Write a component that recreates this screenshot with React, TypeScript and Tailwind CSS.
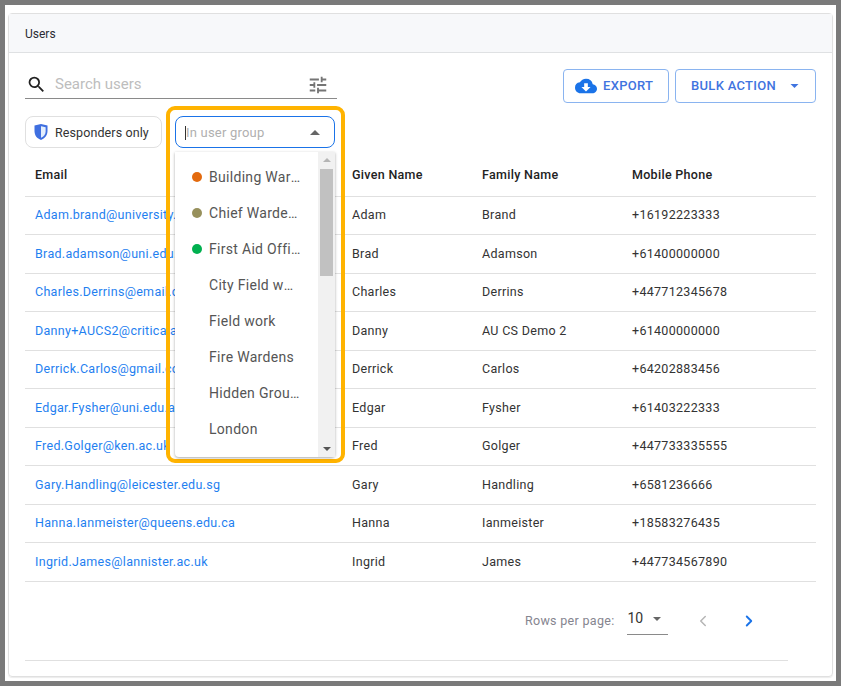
import { ChevronLeft, ChevronRight } from "lucide-react";

const users = [
  ["Adam.brand@university.edu.au", "Adam", "Brand", "+16192223333"],
  ["Brad.adamson@uni.edu.au", "Brad", "Adamson", "+61400000000"],
  ["Charles.Derrins@email.com", "Charles", "Derrins", "+447712345678"],
  ["Danny+AUCS2@criticalarc.com", "Danny", "AU CS Demo 2", "+61400000000"],
  ["Derrick.Carlos@gmail.com", "Derrick", "Carlos", "+64202883456"],
  ["Edgar.Fysher@uni.edu.au", "Edgar", "Fysher", "+61403222333"],
  ["Fred.Golger@ken.ac.uk", "Fred", "Golger", "+447733335555"],
  ["Gary.Handling@leicester.edu.sg", "Gary", "Handling", "+6581236666"],
  ["Hanna.Ianmeister@queens.edu.ca", "Hanna", "Ianmeister", "+18583276435"],
  ["Ingrid.James@lannister.ac.uk", "Ingrid", "James", "+447734567890"],
];

const groups = [
  { name: "Building Wardens", dot: "bg-[#e36a0e]" },
  { name: "Chief Wardens", dot: "bg-[#97905c]" },
  { name: "First Aid Officers", dot: "bg-[#00b04f]" },
  { name: "City Field work", dot: "" },
  { name: "Field work", dot: "" },
  { name: "Fire Wardens", dot: "" },
  { name: "Hidden Groups", dot: "" },
  { name: "London", dot: "" },
];

function Caret({ className }: { className: string }) {
  return (
    <svg viewBox="0 0 10 5" className={className}>
      <path d="M0 0h10L5 5z" fill="currentColor" />
    </svg>
  );
}

function GroupDropdown() {
  return (
    <div className="absolute left-[157px] top-[92px] z-10 h-[357px] w-[179px] rounded-[9px] border-4 border-[#ffb300]">
      <div className="absolute left-[5px] top-[6px] flex h-[32px] w-[160px] items-center justify-between rounded-[8px] border border-[#1a73e8] bg-white pl-[9px] pr-[14px] pt-px">
        <span className="flex items-center text-[13px] tracking-[0.2px] text-[#b0b0b0]">
          <span className="h-[14px] w-px bg-[#333]" />
          In user group
        </span>
        <Caret className="h-[5px] w-[10px] rotate-180 text-[#666]" />
      </div>
      <div className="absolute left-[5px] top-[42px] flex h-[305px] w-[160px] rounded-b-[4px] bg-white shadow-[0_1px_3px_rgba(0,0,0,0.35)]">
        <ul className="flex-1 pt-[7px]">
          {groups.map((g) => (
            <li key={g.name} className="flex h-[36px] items-center pl-[17px] text-[14px] tracking-[0.3px] text-[#555]">
              <span className={`mr-[7px] h-[10px] w-[10px] shrink-0 rounded-full ${g.dot}`} />
              <span className="w-[92px] truncate">{g.name}</span>
            </li>
          ))}
        </ul>
        <div className="flex w-[17px] flex-col items-center bg-[#f1f1f1]">
          <Caret className="mt-[6px] h-[4px] w-[8px] rotate-180 text-[#b5b5b5]" />
          <div className="mt-[7px] h-[107px] w-[13px] bg-[#c1c1c1]" />
          <Caret className="mt-auto mb-[6px] h-[4px] w-[8px] text-[#555]" />
        </div>
      </div>
    </div>
  );
}

export default function App() {
  return (
    <div className="h-[686px] w-[841px] border-[5px] border-[#7a7a7a] bg-white px-[3px] pt-[8px] pb-[4px] font-['Roboto',sans-serif]">
      <div className="relative h-full rounded-[4px] border border-[#e0e0e0] shadow-[0_1px_1px_rgba(0,0,0,0.08)]">
        <div className="flex h-[39px] items-center border-b border-[#dfe1e3] bg-[#f7f8fa] px-[16px] pt-[2px] text-[12px] text-[#2b2b33]">
          Users
        </div>

        <div className="pl-[16px] pr-[16px]">
          <div className="flex items-start justify-between pt-[16px]">
            <div className="flex h-[30px] w-[312px] items-center border-b border-[#8a8a8a] pt-[2px]">
              <svg viewBox="0 0 24 24" className="ml-px h-[21px] w-[21px] text-[#222]" fill="currentColor">
                <path d="M15.5 14h-.79l-.28-.27A6.47 6.47 0 0 0 16 9.5 6.5 6.5 0 1 0 9.5 16c1.61 0 3.09-.59 4.23-1.57l.27.28v.79l5 4.99L20.49 19l-4.99-5zm-6 0C7.01 14 5 11.99 5 9.5S7.01 5 9.5 5 14 7.01 14 9.5 11.99 14 9.5 14z" />
              </svg>
              <span className="ml-[8px] flex-1 text-[15px] text-[#bdbdbd]">Search users</span>
              <svg viewBox="0 0 24 24" className="mr-[8px] h-[22px] w-[22px] text-[#757575]" fill="currentColor">
                <path d="M3 17v2h6v-2H3zM3 5v2h10V5H3zm10 16v-2h8v-2h-8v-2h-2v6h2zM7 9v2H3v2h4v2h2V9H7zm14 4v-2H11v2h10zm-6-4h2V7h4V5h-4V3h-2v6z" />
              </svg>
            </div>
            <div className="flex gap-[6px]">
              <button className="flex h-[34px] w-[106px] items-center rounded-[4px] border border-[#8ab4f0] pl-[11px] text-[13px] font-medium tracking-[0.3px] text-[#3f74e0]">
                <svg viewBox="0 0 24 24" className="mr-[6px] h-[22px] w-[22px] text-[#1a73e8]" fill="currentColor">
                  <path d="M19.35 10.04A7.49 7.49 0 0 0 12 4C9.11 4 6.6 5.64 5.35 8.04A5.994 5.994 0 0 0 0 14c0 3.31 2.69 6 6 6h13c2.76 0 5-2.24 5-5 0-2.64-2.05-4.78-4.65-4.96zM17 13l-5 5-5-5h3V9h4v4h3z" />
                </svg>
                EXPORT
              </button>
              <button className="flex h-[34px] w-[141px] items-center rounded-[4px] border border-[#8ab4f0] pl-[15px] text-[13px] font-medium tracking-[0.3px] text-[#3f74e0]">
                BULK ACTION
                <Caret className="ml-[14px] h-[4px] w-[9px] text-[#3f74e0]" />
              </button>
            </div>
          </div>

          <div className="mt-[13px] flex h-[32px] w-[137px] items-center rounded-[8px] border border-[#e0e0e0] pl-[8px] pt-[2px] text-[12.5px] tracking-[0.1px] text-[#333]">
            <svg viewBox="0 0 14 16" className="mr-[7px] -mt-[2px] h-[16px] w-[14px]">
              <path d="M0.5 1.5 7 0v16C3 14.5 0.5 11.5 0.5 7z" fill="#3f6fe0" />
              <path d="M7 2.2l4.6 1V7.5c0 2.8-1.8 5-4.6 6.3z" fill="#e3eefd" />
              <path d="M7 0l6.5 1.5V7c0 4-2.5 7.5-6.5 9v-2.2c2.8-1.3 4.6-3.5 4.6-6.3V3.2l-4.6-1z" fill="#3f6fe0" />
            </svg>
            Responders only
          </div>

          <table className="mt-[6px] w-[791px] table-fixed border-collapse text-[12.5px] tracking-[0.3px] text-[#333]">
            <colgroup>
              <col className="w-[317px]" />
              <col className="w-[130px]" />
              <col className="w-[150px]" />
              <col />
            </colgroup>
            <thead>
              <tr className="h-[42px] border-b border-[#e0e0e0] text-left text-[#222]">
                <th className="pl-[10px] pt-px font-medium">Email</th>
                <th className="pl-[10px] pt-px font-medium">Given Name</th>
                <th className="pl-[10px] pt-px font-medium">Family Name</th>
                <th className="pl-[10px] pt-px font-medium">Mobile Phone</th>
              </tr>
            </thead>
            <tbody>
              {users.map((u) => (
                <tr key={u[0]} className="h-[38.5px] border-b border-[#e0e0e0]">
                  <td className="truncate pl-[10px] pt-px text-[#1f7ff0]">{u[0]}</td>
                  <td className="pl-[10px] pt-px">{u[1]}</td>
                  <td className="pl-[10px] pt-px">{u[2]}</td>
                  <td className="pl-[10px] pt-px">{u[3]}</td>
                </tr>
              ))}
            </tbody>
          </table>

          <div className="flex h-[78px] w-[791px] items-center pl-[500px] pt-px">
            <span className="text-[12.5px] tracking-[0.3px] text-[#85858f]">Rows per page:</span>
            <div className="ml-[13px] flex h-[28px] w-[41px] items-center border-b border-[#8a8a8a] pb-[4px] text-[14px] text-[#333]">
              10
              <Caret className="ml-[9px] h-[4px] w-[10px] text-[#666]" />
            </div>
            <ChevronLeft className="ml-[26px] h-[18px] w-[18px] text-[#b5b5b5]" strokeWidth={2} />
            <ChevronRight className="ml-[28px] h-[18px] w-[18px] text-[#1a73e8]" strokeWidth={2.5} />
          </div>
          <div className="w-[763px] border-t border-[#e0e0e0]" />
        </div>

        <GroupDropdown />
      </div>
    </div>
  );
}
